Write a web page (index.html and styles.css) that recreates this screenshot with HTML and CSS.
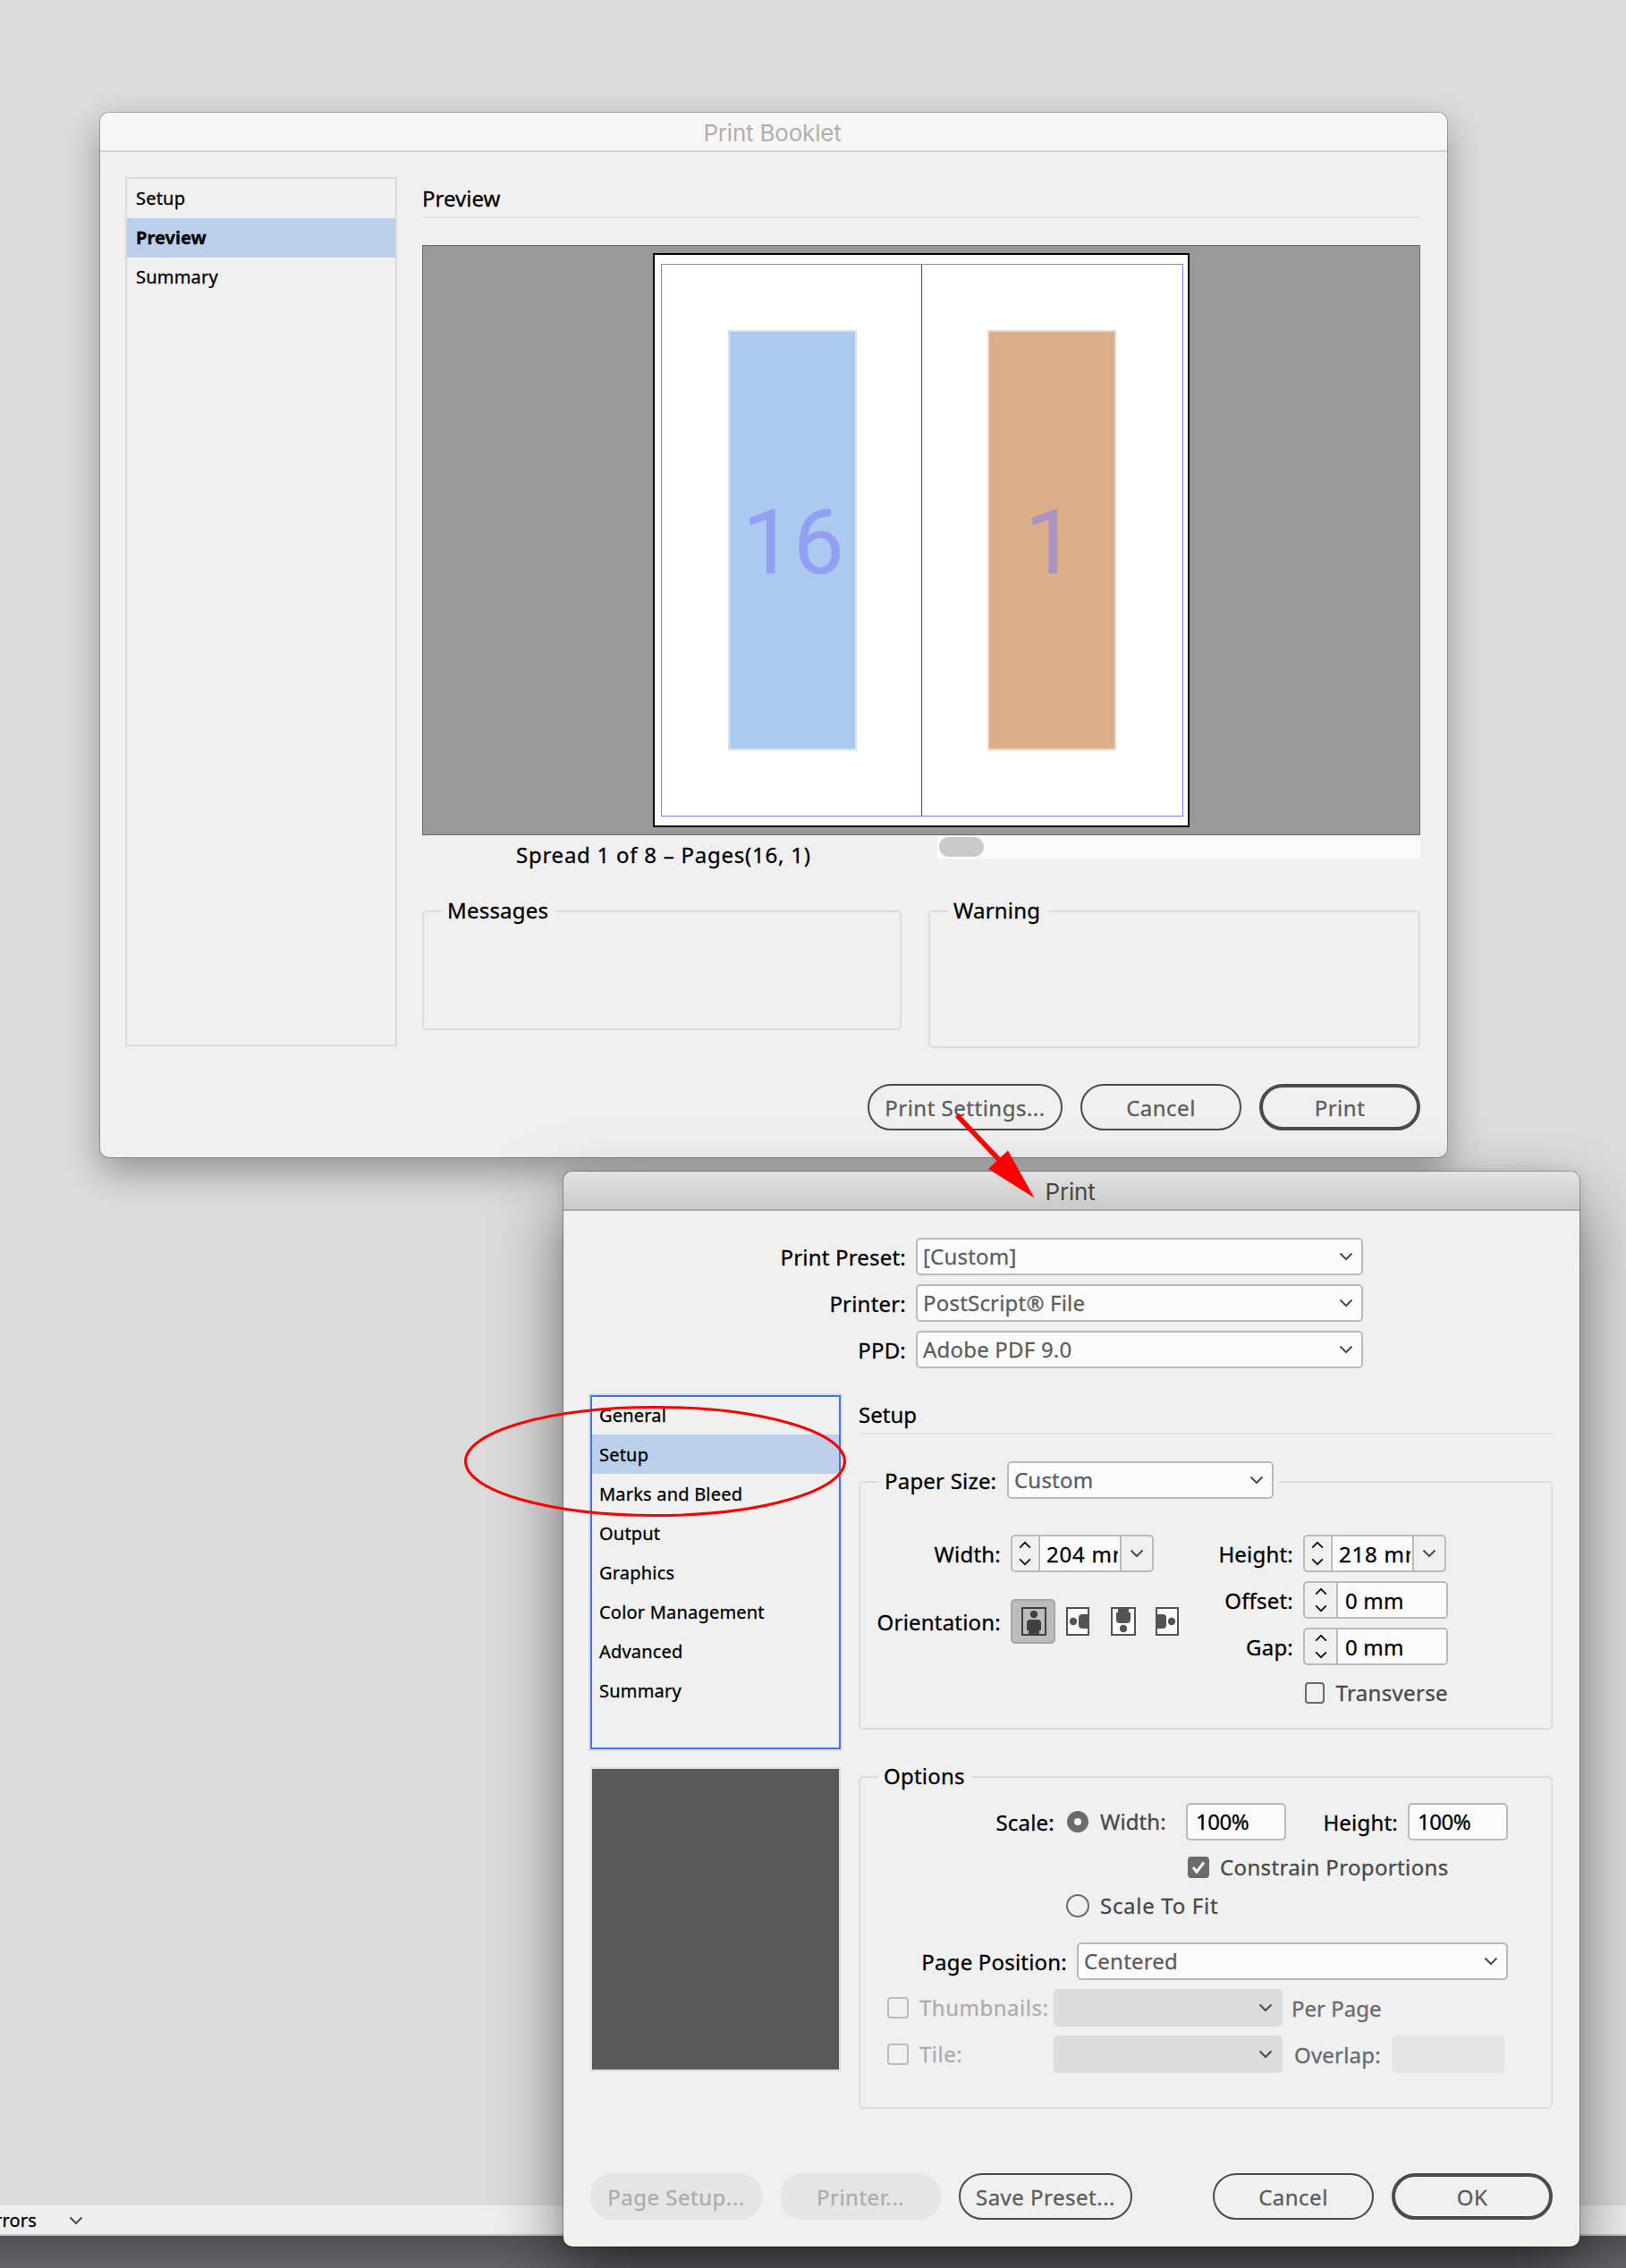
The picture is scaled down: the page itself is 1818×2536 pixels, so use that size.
FILE: index.html
```html
<!DOCTYPE html>
<html lang="en">
<head>
  <meta charset="UTF-8" />
  <meta name="viewport" content="width=device-width, initial-scale=1.0"/>
  <title>Print Booklet</title>
  <link rel="stylesheet" href="styles.css">
</head>

<body>
  <svg width="0" height="0" class="defs">
    <symbol id="chev" viewBox="0 0 16 10"><path d="M1.5 1.5 L8 8 L14.5 1.5" fill="none" stroke="currentColor" stroke-width="2"/></symbol>
    <symbol id="chev-up" viewBox="0 0 16 10"><path d="M1.5 8.5 L8 2 L14.5 8.5" fill="none" stroke="currentColor" stroke-width="2"/></symbol>
  </svg>

  <div class="desktop">
    <footer class="status">
      <span>rrors</span>
      <svg class="chev"><use href="#chev"/></svg>
    </footer>
    <div class="dock"></div>

    <!-- Print Booklet -->
    <section class="window booklet">
      <header class="titlebar">Print Booklet</header>
      <div class="body">
        <div class="columns">
          <ul class="list">
            <li>Setup</li>
            <li class="selected">Preview</li>
            <li>Summary</li>
          </ul>
          <div class="pane">
            <h2>Preview</h2>
            <div class="preview">
              <div class="sheet">
                <div class="spread">
                  <div class="page"><div class="block blue">16</div></div>
                  <div class="page"><div class="block orange">1</div></div>
                </div>
              </div>
            </div>
            <div class="nav">
              <span class="caption">Spread 1 of 8 – Pages(16, 1)</span>
              <div class="scrollbar"><div class="thumb"></div></div>
            </div>
            <div class="notes">
              <fieldset class="messages"><legend>Messages</legend></fieldset>
              <fieldset class="warning"><legend>Warning</legend></fieldset>
            </div>
          </div>
        </div>
        <div class="buttons">
          <button class="btn w218">Print Settings...</button>
          <button class="btn w180">Cancel</button>
          <button class="btn w180 primary">Print</button>
        </div>
      </div>
    </section>

    <!-- Print -->
    <section class="window print">
      <header class="titlebar">Print</header>
      <div class="body">
        <div class="top">
          <label>Print Preset:</label>
          <div class="select">[Custom]<svg class="chev"><use href="#chev"/></svg></div>
          <label>Printer:</label>
          <div class="select">PostScript® File<svg class="chev"><use href="#chev"/></svg></div>
          <label>PPD:</label>
          <div class="select">Adobe PDF 9.0<svg class="chev"><use href="#chev"/></svg></div>
        </div>

        <div class="columns">
          <div class="side">
            <ul class="list focused">
              <li>General</li>
              <li class="selected">Setup</li>
              <li>Marks and Bleed</li>
              <li>Output</li>
              <li>Graphics</li>
              <li>Color Management</li>
              <li>Advanced</li>
              <li>Summary</li>
            </ul>
            <div class="page-thumb"></div>
          </div>

          <div class="pane">
            <h2>Setup</h2>
            <fieldset class="paper">
              <legend>
                <label>Paper Size:</label>
                <div class="select">Custom<svg class="chev"><use href="#chev"/></svg></div>
              </legend>
              <div class="paper-grid">
                <label>Width:</label>
                <div class="spinner combo">
                  <span class="arrows"><svg><use href="#chev-up"/></svg><svg><use href="#chev"/></svg></span>
                  <span class="value"><span class="clip">204 mm</span></span>
                  <span class="drop"><svg class="chev"><use href="#chev"/></svg></span>
                </div>
                <label>Height:</label>
                <div class="spinner combo">
                  <span class="arrows"><svg><use href="#chev-up"/></svg><svg><use href="#chev"/></svg></span>
                  <span class="value"><span class="clip">218 mm</span></span>
                  <span class="drop"><svg class="chev"><use href="#chev"/></svg></span>
                </div>

                <label class="orient-label">Orientation:</label>
                <div class="orient">
                  <span class="orient-btn on">
                    <svg width="28" height="32" viewBox="0 0 28 32">
                      <rect x="1" y="1" width="26" height="30" fill="none" stroke="currentColor" stroke-width="2"/>
                      <circle cx="14" cy="8" r="4.2"/>
                      <path d="M6 18 a4 4 0 0 1 4 -4 h8 a4 4 0 0 1 4 4 v8 h-2 v5 h-12 v-5 h-2 z"/>
                    </svg>
                  </span>
                  <span class="orient-btn">
                    <svg width="26" height="32" viewBox="0 0 26 32">
                      <rect x="1" y="1" width="24" height="30" fill="#fafafa" stroke="currentColor" stroke-width="2"/>
                      <circle cx="8" cy="16" r="4.2"/>
                      <path d="M25 8 h-7 a4 4 0 0 0 -4 4 v8 a4 4 0 0 0 4 4 h7 z"/>
                    </svg>
                  </span>
                  <span class="orient-btn">
                    <svg width="28" height="32" viewBox="0 0 28 32">
                      <rect x="1" y="1" width="26" height="30" fill="#fafafa" stroke="currentColor" stroke-width="2"/>
                      <path d="M8 1 h12 v5 h2 v8 a4 4 0 0 1 -4 4 h-8 a4 4 0 0 1 -4 -4 v-8 h2 z"/>
                      <circle cx="14" cy="24" r="4.2"/>
                    </svg>
                  </span>
                  <span class="orient-btn">
                    <svg width="26" height="32" viewBox="0 0 26 32">
                      <rect x="1" y="1" width="24" height="30" fill="#fafafa" stroke="currentColor" stroke-width="2"/>
                      <path d="M1 8 h7 a4 4 0 0 1 4 4 v8 a4 4 0 0 1 -4 4 h-7 z"/>
                      <circle cx="18" cy="16" r="4.2"/>
                    </svg>
                  </span>
                </div>

                <label class="col3">Offset:</label>
                <div class="spinner">
                  <span class="arrows"><svg><use href="#chev-up"/></svg><svg><use href="#chev"/></svg></span>
                  <span class="value">0 mm</span>
                </div>
                <label class="col3">Gap:</label>
                <div class="spinner">
                  <span class="arrows"><svg><use href="#chev-up"/></svg><svg><use href="#chev"/></svg></span>
                  <span class="value">0 mm</span>
                </div>
                <div class="option transverse"><span class="check"></span>Transverse</div>
              </div>
            </fieldset>

            <fieldset class="options">
              <legend>Options</legend>
              <div class="row scale">
                <label>Scale:</label>
                <div class="option"><span class="radio on"></span>Width:</div>
                <div class="input">100%</div>
                <label class="height">Height:</label>
                <div class="input">100%</div>
              </div>
              <div class="row constrain">
                <div class="option">
                  <span class="check on"><svg width="18" height="18" viewBox="0 0 18 18"><path d="M3 9 L7 14 L15 3.500" fill="none" stroke="#f4f4f4" stroke-width="3"/></svg></span>
                  Constrain Proportions
                </div>
              </div>
              <div class="row fit">
                <div class="option"><span class="radio"></span>Scale To Fit</div>
              </div>
              <div class="row position">
                <label>Page Position:</label>
                <div class="select">Centered<svg class="chev"><use href="#chev"/></svg></div>
              </div>
              <div class="row multi">
                <div class="option off"><span class="check"></span>Thumbnails:</div>
                <div class="select off"><svg class="chev"><use href="#chev"/></svg></div>
                <span class="after">Per Page</span>
              </div>
              <div class="row multi">
                <div class="option off"><span class="check"></span>Tile:</div>
                <div class="select off"><svg class="chev"><use href="#chev"/></svg></div>
                <span class="after overlap">Overlap:</span>
                <div class="input off"></div>
              </div>
            </fieldset>
          </div>
        </div>

        <div class="buttons">
          <button class="btn w192 off">Page Setup...</button>
          <button class="btn w180 off">Printer...</button>
          <button class="btn w194">Save Preset...</button>
          <span class="spacer"></span>
          <button class="btn w180">Cancel</button>
          <button class="btn w180 primary">OK</button>
        </div>
      </div>
    </section>

    <!-- red annotations over both windows -->
    <svg class="marks" viewBox="0 0 1818 2536">
      <line x1="1070" y1="1247" x2="1120" y2="1300" stroke="#ff0000" stroke-width="5.5"/>
      <polygon points="1156.500,1339.500 1105,1307 1127,1286.500" fill="#ff0000"/>
      <ellipse cx="732.500" cy="1634" rx="212" ry="60.500" fill="none" stroke="#ff0000" stroke-width="3"/>
    </svg>
  </div>
</body>
</html>
```
FILE: styles.css
```css
* { box-sizing: border-box; margin: 0; padding: 0; }
body {
  font-family: "Noto Sans", "Open Sans", sans-serif;
  font-size: 24px;
  letter-spacing: 0.2px;
  color: #000;
  -webkit-text-stroke: 0.3px;
}
ul { list-style: none; }
.defs { position: absolute; }
.desktop {
  position: relative;
  width: 1818px;
  height: 2536px;
  overflow: hidden;
  background: #dcdcdc;
  display: flex;
  flex-direction: column;
  justify-content: flex-end;
}
.status {
  height: 34px;
  background: #efefef;
  border-bottom: 2px solid #c5c8c9;
  font-size: 20px;
  line-height: 33px;
  display: flex;
  align-items: center;
  gap: 36px;
}
.status span { margin-left: -6px; }
.status .chev { color: #4b4b4b; margin-top: 1px; }
.dock {
  height: 36px;
  background: linear-gradient(#515255, #636267);
}
.chev { width: 16px; height: 10px; color: #4b4b4b; }

/* windows */
.window {
  position: absolute;
  background: #f0f0f0;
  border-radius: 10px;
}
.booklet {
  left: 112px; top: 126px;
  width: 1506px; height: 1168px;
  box-shadow: 0 0 0 1px rgba(0,0,0,0.22), 0 16px 40px rgba(0,0,0,0.34);
}
.print {
  left: 630px; top: 1310px;
  width: 1136px; height: 1202px;
  box-shadow: 0 0 0 1px rgba(0,0,0,0.25), 0 36px 80px rgba(0,0,0,0.5), 0 0 16px rgba(0,0,0,0.1);
}
.titlebar {
  height: 44px;
  line-height: 46px;
  text-align: center;
  font-family: Inter, Roboto, sans-serif;
  font-size: 26px;
  letter-spacing: -0.2px;
  border-radius: 10px 10px 0 0;
  padding-right: 3px;
  -webkit-text-stroke: 0;
}
.booklet .titlebar {
  background: #f6f6f6;
  border-bottom: 2px solid #d4d4d4;
  color: #b0b0b0;
}
.print .titlebar {
  background: linear-gradient(#e3e3e3, #cacaca);
  border-bottom: 2px solid #ababab;
  color: #484848;
}
.body { padding: 28px 30px 0 28px; }
.print .body { padding-top: 30px; }
.columns { display: flex; }

/* lists */
.list {
  border: 2px solid #dcdcdc;
  font-size: 20px;
}
.list li {
  height: 44px;
  line-height: 43px;
  padding-left: 10px;
}
.list .selected { background: #bcd0ec; }
.booklet .list { width: 304px; height: 972px; margin-right: 28px; }
.booklet .selected { font-weight: bold; letter-spacing: 0; }
.list.focused {
  width: 284px;
  height: 400px;
  outline: 2px solid #4275de;
  outline-offset: -4px;
}
.focused li { line-height: 45px; }
.focused .selected { margin: 0 2px; padding-left: 8px; }

h2 {
  height: 46px;
  line-height: 48px;
  font-size: 24px;
  font-weight: normal;
  letter-spacing: 0;
  border-bottom: 2px solid #e4e4e4;
}

/* preview */
.booklet .pane { width: 1116px; }
.preview {
  height: 660px;
  margin-top: 30px;
  border: 1px solid #6b6b6b;
  background: #999;
  display: flex;
  justify-content: center;
  align-items: center;
}
.sheet {
  width: 600px;
  height: 642px;
  border: 2px solid #000;
  background: #fff;
  padding: 10px 5px 10px 7px;
}
.spread {
  height: 100%;
  border: 1px solid #7f7fff;
  display: flex;
}
.page {
  flex: 1;
  display: flex;
  justify-content: center;
  align-items: center;
}
.page:first-child {
  flex: none;
  width: 291px;
  border-right: 1px solid #4a4ae6;
  padding-left: 1px;
}
.page:last-child { padding-right: 2px; }
.block {
  width: 144px;
  height: 470px;
  border: solid #d6e4f7;
  border-width: 2px;
  text-align: center;
  font-family: Roboto, sans-serif;
  font-size: 101px;
  letter-spacing: 0;
  line-height: 472px;
  padding-left: 3px;
}
.blue { background: #acc9ef; color: #939ff2; }
.orange { background: #dcae89; border-color: #f0d8c8; color: #a893c2; padding: 0 2px 0 0; }

.nav { display: flex; height: 69px; }
.caption {
  width: 576px;
  padding-left: 105px;
  line-height: 44px;
  letter-spacing: 0.75px;
}
.scrollbar {
  flex: 1;
  height: 26px;
  padding: 2px;
  background: #fbfbfb;
}
.thumb {
  width: 50px;
  height: 22px;
  border-radius: 11px;
  background: #cacaca;
}
fieldset {
  border: 2px solid #dcdcdc;
  border-radius: 5px;
  min-width: 0;
}
legend {
  height: 32px;
  line-height: 30px;
  margin-left: 20px;
  padding: 0 8px 0 6px;
}
.notes { display: flex; justify-content: space-between; align-items: flex-start; height: 169px; }
.messages { width: 536px; height: 149px; }
.warning { width: 550px; height: 169px; }

/* buttons */
.buttons { display: flex; justify-content: flex-end; gap: 20px; margin-top: 40px; }
.print .buttons { margin-top: 72px; padding-left: 2px; }
.spacer { flex: 1; margin: 0 -20px; }
.btn {
  height: 52px;
  border: 2px solid #4b4b4b;
  border-radius: 26px;
  background: transparent;
  font: inherit;
  letter-spacing: 0.5px;
  color: #5c5c5c;
  white-space: nowrap;
  padding-top: 1px;
}
.btn.primary { border-width: 4px; }
.btn.off { background: #e5e5e5; border-color: #e5e5e5; color: #adadad; }
.w180 { width: 180px; }
.w192 { width: 192px; }
.w194 { width: 194px; }
.w218 { width: 218px; }

/* form controls */
.top {
  display: grid;
  grid-template-columns: 355px 500px;
  grid-auto-rows: 42px;
  gap: 10px 11px;
  margin-bottom: 28px;
}
label { text-align: right; line-height: 43px; white-space: nowrap; }
.select, .input {
  height: 42px;
  border: 2px solid #bababa;
  border-radius: 5px;
  background: #fbfbfb;
  line-height: 40px;
  color: #5e5e5e;
  display: flex;
  justify-content: space-between;
  align-items: center;
  padding: 0 9px 0 6px;
}
.select .chev { margin-bottom: 1px; }
.select.off { background: #dcdcdc; border-color: #dcdcdc; justify-content: flex-end; }
.input { width: 112px; color: #000; letter-spacing: -0.5px; padding-left: 9px; }
.input.off { width: 126px; background: #e5e5e5; border-color: #e5e5e5; }
.side { width: 284px; margin-right: 18px; }
.page-thumb {
  width: 280px;
  height: 340px;
  margin: 18px 0 0 2px;
  border: 2px solid #dcdcdc;
  background: #595959;
}
.print .pane { width: 776px; }

.paper { height: 300px; margin-top: 30px; }
.paper legend { height: 46px; width: 448px; padding: 0 0 0 7px; display: flex; }
.paper legend label { width: 137px; text-align: left; }
.paper legend .select { width: 298px; }
.paper-grid {
  margin-top: 36px;
  display: grid;
  grid-template-columns: 157px 190px 115px 162px;
  grid-auto-rows: 42px;
  gap: 10px 11px;
}
.spinner {
  display: flex;
  height: 42px;
  border: 2px solid #bababa;
  border-radius: 5px;
  overflow: hidden;
}
.combo { width: 160px; }
.arrows {
  width: 35px;
  display: flex;
  flex-direction: column;
  justify-content: space-between;
  align-items: center;
  padding: 5px 0;
}
.arrows svg { width: 16px; height: 9px; color: #111; }
.combo .arrows { width: 29px; border-right: 1px solid #fff; }
.value {
  flex: 1;
  background: #fbfbfb;
  border-left: 2px solid #bababa;
  line-height: 39px;
  padding-left: 8px;
  white-space: nowrap;
}
.combo .value { padding: 0 2px 0 7px; letter-spacing: 0.8px; min-width: 0; }
.clip { display: block; overflow: hidden; }
.drop {
  width: 36px;
  border-left: 2px solid #bababa;
  display: flex;
  align-items: center;
  justify-content: center;
}
.orient-label { grid-column: 1; grid-row: 2 / span 2; margin-top: 20px; line-height: 51px; }
.orient { grid-column: 2; grid-row: 2 / span 2; margin-top: 20px; display: flex; }
.orient-btn {
  flex: none;
  width: 50px;
  height: 50px;
  padding: 9px 0 0 12px;
  color: #535353;
  fill: #535353;
}
.orient-btn svg { display: block; }
.orient-btn.on {
  background: #bcbcbc;
  border: 2px solid #a6a6a6;
  border-radius: 5px;
  padding: 7px 0 0 10px;
  color: #404040;
  fill: #404040;
}
.col3 { grid-column: 3; }
.transverse { grid-column: 4; padding-left: 2px; }
.option {
  display: flex;
  align-items: center;
  gap: 12px;
  line-height: 42px;
  color: #484848;
  letter-spacing: 0.35px;
  white-space: nowrap;
}
.option.off { color: #adadad; }
.check {
  width: 24px;
  height: 24px;
  border: 2px solid #6b6b6b;
  border-radius: 4px;
}
.check.on { background: #6b6b6b; padding: 1px; }
.check.on svg { display: block; }
.off .check { border-color: #bcbcbc; }
.radio {
  width: 26px;
  height: 26px;
  border: 2px solid #6b6b6b;
  border-radius: 50%;
}
.radio.on { width: 24px; height: 24px; margin: 0 1px; border-width: 8px; background: #f4f4f4; }

.options { height: 387px; margin-top: 37px; }
.row { display: flex; height: 42px; }
.scale { margin-top: 13px; }
.scale label { width: 217px; }
.scale .option { width: 134px; margin-left: 13px; letter-spacing: 0.1px; }
.scale .height { width: 125px; margin-right: 11px; }
.constrain { margin-top: 9px; padding-left: 366px; }
.fit { margin-top: 1px; padding-left: 230px; }
.fit .option { letter-spacing: 0.7px; }
.position { margin-top: 20px; gap: 11px; }
.position label { width: 231px; }
.position .select { width: 482px; }
.multi { margin-top: 10px; padding-left: 30px; }
.multi .option { width: 186px; letter-spacing: 0.5px; }
.multi .select { width: 256px; }
.after { padding-left: 10px; line-height: 43px; color: #6a6a6a; letter-spacing: 0; }
.overlap { width: 122px; padding-left: 13px; letter-spacing: 0.2px; }

.marks {
  position: absolute;
  left: 0; top: 0;
  width: 1818px;
  height: 2536px;
}
```
